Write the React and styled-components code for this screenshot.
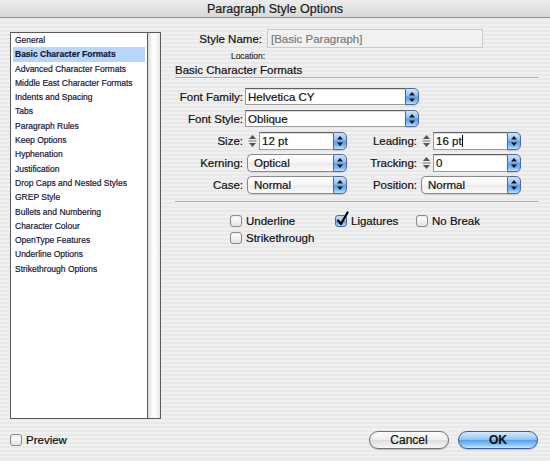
import React from 'react';
import styled, { createGlobalStyle, css } from 'styled-components';

const FONT = `"Liberation Sans", Arial, Helvetica, sans-serif`;

const Global = createGlobalStyle`
  html, body { margin: 0; padding: 0; }
  body { font-family: ${FONT}; background: #ececec; }
`;

const Window = styled.div`
  width: 550px;
  height: 461px;
  display: flex;
  flex-direction: column;
  overflow: hidden;
  font-family: ${FONT};
  color: #111;
  -webkit-text-stroke: 0.2px currentColor;
  background: repeating-linear-gradient(
    to bottom,
    #f0f0f0 0px, #f0f0f0 2px, #e9e9e9 2px, #e9e9e9 4px
  );
`;

const TitleBar = styled.div`
  flex: none;
  height: 17px;
  border-bottom: 1px solid #909090;
  background: linear-gradient(#ededed, #d8d8d8);
  display: flex;
  align-items: center;
  justify-content: center;
  font-size: 12.5px;
  color: #1a1a1a;
`;

const Main = styled.div`
  flex: none;
  display: flex;
  align-items: flex-start;
  padding: 0 12px 0 10px;
`;

const Sidebar = styled.div`
  margin-top: 14px;
  width: 151px;
  height: 387px;
  box-sizing: border-box;
  border: 1px solid #5a5a5a;
  background: #fff;
  display: flex;
`;

const List = styled.ul`
  flex: 1;
  margin: 0;
  padding: 0;
  list-style: none;
`;

const Item = styled.li`
  height: 14.3px;
  line-height: 14.3px;
  margin: 0 2px;
  padding-left: 2px;
  font-size: 8.5px;
  color: #18183a;
  white-space: nowrap;
  ${p => p.$active && css`
    background: #b7d6fb;
    font-weight: bold;
  `}
`;

const ScrollTrack = styled.div`
  width: 12px;
  flex: none;
  border-left: 1px solid #5a5a5a;
  background: linear-gradient(to right, #d9d9d9, #f6f6f6 30%, #ffffff 55%, #e6e6e6);
`;

const Panel = styled.div`
  flex: 1;
  margin-left: 14px;
  margin-top: 11px;
  display: flex;
  flex-direction: column;
`;

const NameRow = styled.div`
  display: flex;
  align-items: center;
  height: 19px;
`;

const NameLabel = styled.span`
  width: 87px;
  text-align: right;
  font-size: 11.5px;
  white-space: nowrap;
`;

const NameInput = styled.span`
  margin-left: 5px;
  width: 216px;
  height: 19px;
  box-sizing: border-box;
  border: 1px solid #c9c9c9;
  background: #f1f1f1;
  color: #7a7a7a;
  font-size: 11.5px;
  display: flex;
  align-items: center;
  padding-left: 3px;
`;

const SmallLabel = styled.div`
  width: 90px;
  margin-top: 3px;
  text-align: right;
  font-size: 8.4px;
  line-height: 10px;
  color: #333;
`;

const SectionHeading = styled.div`
  margin-top: 3px;
  font-size: 11.5px;
  line-height: 13px;
  border-bottom: 1px solid #a8a8a8;
  box-shadow: 0 1px 0 #fafafa;
`;

const Divider = styled.div`
  margin-top: 7px;
  height: 0;
  border-top: 1px solid #a8a8a8;
  box-shadow: 0 1px 0 #fafafa;
`;

const FormGrid = styled.div`
  margin-top: 10px;
  display: grid;
  grid-template-columns: 68px 100px 66px 100px;
  grid-auto-rows: 18px;
  column-gap: 4px;
  row-gap: 4px;
`;

const FieldLabel = styled.span`
  align-self: center;
  text-align: right;
  font-size: 11.5px;
  white-space: nowrap;
`;

const Control = styled.span`
  display: flex;
  height: 18px;
  ${p => p.$wide && css`
    grid-column: 2 / span 3;
    width: 174px;
    margin-left: -2px;
    height: 17px;
  `}
`;

const TextField = styled.span`
  flex: 1;
  height: 100%;
  box-sizing: border-box;
  background: #fff;
  border: 1px solid #9a9a9a;
  border-top-color: #5f5f5f;
  border-right: none;
  box-shadow: inset 0 1px 1px rgba(0, 0, 0, 0.15);
  display: flex;
  align-items: center;
  padding-left: 2px;
  font-size: 11.5px;
  white-space: nowrap;
`;

const PopupBody = styled.span`
  flex: 1;
  height: 100%;
  box-sizing: border-box;
  border: 1px solid #8a8a8a;
  border-right: none;
  border-radius: 5px 0 0 5px;
  background: linear-gradient(#ffffff, #f5f5f5 50%, #ebebeb 51%, #fbfbfb);
  box-shadow: 0 1px 1px rgba(0, 0, 0, 0.12);
  display: flex;
  align-items: center;
  padding-left: 6px;
  font-size: 11.5px;
`;

const Cap = styled.span`
  width: 14px;
  height: 100%;
  flex: none;
  box-sizing: border-box;
  border: 1px solid #4d6c9e;
  border-radius: 0 5px 5px 0;
  background: linear-gradient(#cfe5fc 0%, #8fbff1 45%, #5d9fe9 52%, #7ab8f3 80%, #bde4fe 100%);
  box-shadow: 0 1px 1px rgba(0, 0, 0, 0.15);
  display: flex;
  align-items: center;
  justify-content: center;
`;

const Stepper = styled.span`
  width: 11px;
  flex: none;
  margin-right: 1px;
  display: flex;
  align-items: center;
  justify-content: center;
`;

const Caret = styled.span`
  display: inline-block;
  width: 1px;
  height: 12px;
  background: #000;
  margin-left: 0.5px;
`;

const CheckGrid = styled.div`
  margin-top: 11px;
  padding-left: 55px;
  display: grid;
  grid-template-columns: 105px 81px auto;
  grid-auto-rows: 15px;
  row-gap: 2px;
`;

const CheckItem = styled.label`
  display: flex;
  align-items: center;
  gap: 4px;
  font-size: 11.5px;
  white-space: nowrap;
`;

const Box = styled.span`
  position: relative;
  flex: none;
  width: 12px;
  height: 12px;
  box-sizing: border-box;
  border: 1px solid #8a8a8a;
  border-radius: 3px;
  background: linear-gradient(#ffffff, #e4e4e4);
  box-shadow: inset 0 1px 1px rgba(0, 0, 0, 0.08);
  ${p => p.$checked && css`
    border-color: #4d6c9e;
    background: linear-gradient(#d3e8fc, #8fc0f2 48%, #5e9fe8 52%, #a9d7fc);
  `}
`;

const CheckMark = styled.svg`
  position: absolute;
  left: 0px;
  top: -4px;
  overflow: visible;
`;

const Footer = styled.div`
  flex: 1;
  display: flex;
  align-items: center;
  padding: 0 12px 0 10px;
`;

const Spacer = styled.span`
  flex: 1;
`;

const Button = styled.button`
  width: 80px;
  height: 18px;
  margin-left: 9px;
  padding: 0;
  border-radius: 9px;
  font-family: ${FONT};
  font-size: 12px;
  color: #111;
  -webkit-text-stroke: 0.2px currentColor;
  border: 1px solid #707070;
  background: linear-gradient(#fcfcfc, #eeeeee 50%, #dedede 52%, #f6f6f6);
  box-shadow: 0 1px 1px rgba(0, 0, 0, 0.2);
  ${p => p.$primary && css`
    border-color: #3d5f98;
    font-weight: bold;
    background: linear-gradient(#d6eafd, #97c6f3 46%, #5ba1eb 52%, #8cc8f8 82%, #c8ecff);
  `}
`;

const CapArrows = () => (
  <svg width="6" height="10" viewBox="0 0 6 10">
    <polygon points="3,0 6,3.5 0,3.5" fill="#111" />
    <polygon points="0,6.5 6,6.5 3,10" fill="#111" />
  </svg>
);

const StepArrows = () => (
  <svg width="9" height="14" viewBox="0 0 9 14">
    <polygon points="4.5,1 8,5 1,5" fill="#555" />
    <line x1="0.5" y1="7" x2="8.5" y2="7" stroke="#777" strokeWidth="1" />
    <polygon points="1,9 8,9 4.5,13" fill="#555" />
  </svg>
);

const Combo = ({ value, wide, caret }) => (
  <Control $wide={wide}>
    <TextField>{value}{caret && <Caret />}</TextField>
    <Cap><CapArrows /></Cap>
  </Control>
);

const Spin = ({ value, caret }) => (
  <Control>
    <Stepper><StepArrows /></Stepper>
    <TextField>{value}{caret && <Caret />}</TextField>
    <Cap><CapArrows /></Cap>
  </Control>
);

const Popup = ({ value }) => (
  <Control>
    <PopupBody>{value}</PopupBody>
    <Cap><CapArrows /></Cap>
  </Control>
);

const Check = ({ label, checked }) => (
  <CheckItem>
    <Box $checked={checked}>
      {checked && (
        <CheckMark width="12" height="14" viewBox="0 0 12 14">
          <path d="M2 8.5 L5 12 L11.5 0.5" fill="none" stroke="#000" strokeWidth="2.2" strokeLinecap="round" strokeLinejoin="round" />
        </CheckMark>
      )}
    </Box>
    {label}
  </CheckItem>
);

const items = [
  'General',
  'Basic Character Formats',
  'Advanced Character Formats',
  'Middle East Character Formats',
  'Indents and Spacing',
  'Tabs',
  'Paragraph Rules',
  'Keep Options',
  'Hyphenation',
  'Justification',
  'Drop Caps and Nested Styles',
  'GREP Style',
  'Bullets and Numbering',
  'Character Colour',
  'OpenType Features',
  'Underline Options',
  'Strikethrough Options',
];

export default function App() {
  return (
    <>
      <Global />
      <Window>
        <TitleBar>Paragraph Style Options</TitleBar>
        <Main>
          <Sidebar>
            <List>
              {items.map((t, i) => (
                <Item key={t} $active={i === 1}>{t}</Item>
              ))}
            </List>
            <ScrollTrack />
          </Sidebar>
          <Panel>
            <NameRow>
              <NameLabel>Style Name:</NameLabel>
              <NameInput>[Basic Paragraph]</NameInput>
            </NameRow>
            <SmallLabel>Location:</SmallLabel>
            <SectionHeading>Basic Character Formats</SectionHeading>
            <FormGrid>
              <FieldLabel>Font Family:</FieldLabel>
              <Combo value="Helvetica CY" wide />
              <FieldLabel>Font Style:</FieldLabel>
              <Combo value="Oblique" wide />
              <FieldLabel>Size:</FieldLabel>
              <Spin value="12 pt" />
              <FieldLabel>Leading:</FieldLabel>
              <Spin value="16 pt" caret />
              <FieldLabel>Kerning:</FieldLabel>
              <Popup value="Optical" />
              <FieldLabel>Tracking:</FieldLabel>
              <Spin value="0" />
              <FieldLabel>Case:</FieldLabel>
              <Popup value="Normal" />
              <FieldLabel>Position:</FieldLabel>
              <Popup value="Normal" />
            </FormGrid>
            <Divider />
            <CheckGrid>
              <Check label="Underline" />
              <Check label="Ligatures" checked />
              <Check label="No Break" />
              <Check label="Strikethrough" />
            </CheckGrid>
          </Panel>
        </Main>
        <Footer>
          <Check label="Preview" />
          <Spacer />
          <Button>Cancel</Button>
          <Button $primary>OK</Button>
        </Footer>
      </Window>
    </>
  );
}
